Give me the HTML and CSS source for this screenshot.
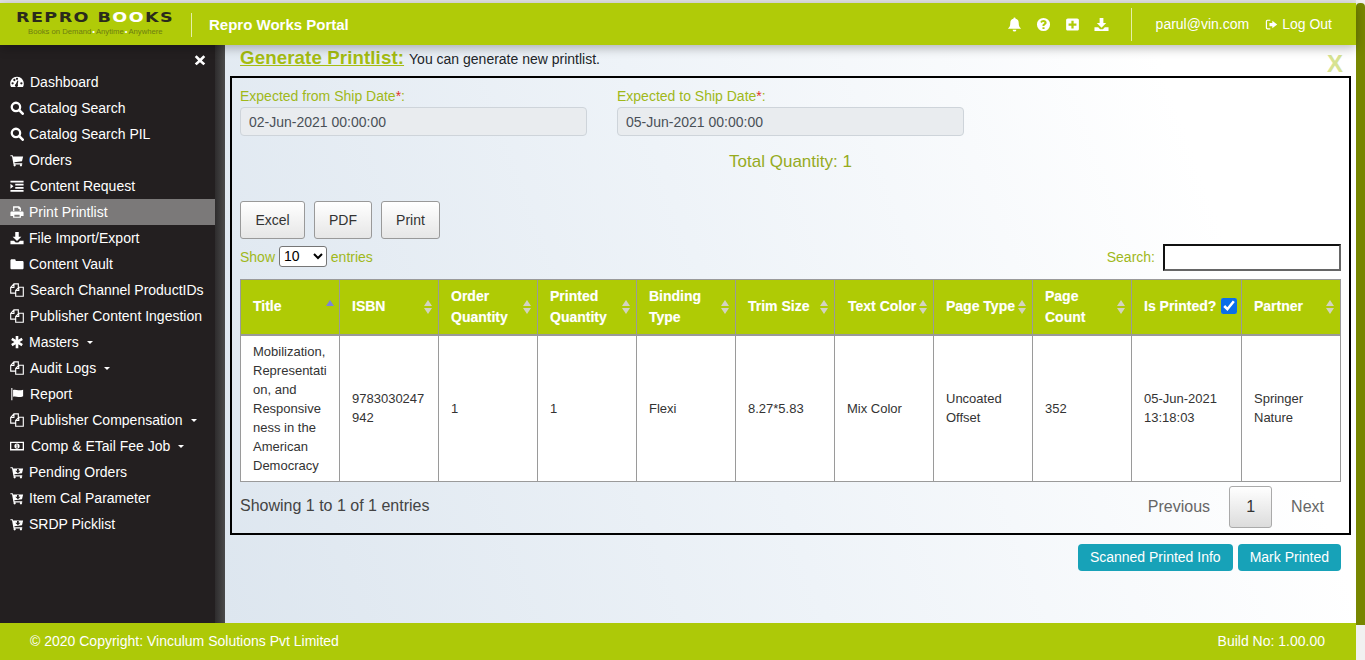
FILE: index.html
```html
<!DOCTYPE html>
<html lang="en">
<head>
<meta charset="utf-8">
<title>Repro Works Portal</title>
<link rel="stylesheet" href="styles.css">
</head>
<body>
<svg class="sprite" aria-hidden="true">
  <symbol id="i-dash" viewBox="0 0 16 16"><path fill-rule="evenodd" d="M8 2C3.400 2 .2 5.700.2 10c0 1.400.3 2.600 1 3.800h13.600c.7-1.200 1-2.400 1-3.800C15.800 5.700 12.600 2 8 2zM3 10.800a1.300 1.300 0 1 1 0-2.600 1.300 1.300 0 0 1 0 2.600zm2-3.800a1.300 1.300 0 1 1 0-2.600 1.300 1.300 0 0 1 0 2.600zM8 5.700a1.300 1.300 0 1 1 0-2.600 1.300 1.300 0 0 1 0 2.600zm1.100 6.700a1.800 1.800 0 1 1-2.400-2.200L8.500 6.400l1 .3-.6 3.900c.3.500.4 1.100.2 1.800zm3.900-1.600a1.300 1.300 0 1 1 0-2.600 1.300 1.300 0 0 1 0 2.600z"/></symbol>
  <symbol id="i-search" viewBox="0 0 16 16"><circle cx="6.800" cy="6.800" r="4.800" fill="none" stroke="currentColor" stroke-width="2.600"/><path d="M10.500 10.500l4 4" stroke="currentColor" stroke-width="3" stroke-linecap="round"/></symbol>
  <symbol id="i-cart" viewBox="0 0 16 16"><path d="M.5 2.500h2.600l.4 1.500H15l-1.300 5.500-8.700 1 .3 1.200h8.700v1.300H4L2.300 3.800H.5z"/><circle cx="5.300" cy="14" r="1.300"/><circle cx="12.500" cy="14" r="1.300"/></symbol>
  <symbol id="i-indent" viewBox="0 0 16 16"><path d="M.5 2h15v2H.5zM6 5.500h9.500v2H6zM6 9h9.500v2H6zM.5 12.500h15v2H.5zM.5 5.500l3.500 2.700L.5 11z"/></symbol>
  <symbol id="i-print" viewBox="0 0 16 16"><path fill-rule="evenodd" d="M3.500 1.500h7l2 2v3.300H11V4.500H9.500V3h-4.500v3.800H3.500zM1.800 7.500h12.400c.7 0 1.300.6 1.300 1.300v3.700h-3v2H3.500v-2h-3V8.800c0-.7.600-1.300 1.300-1.300zM5 11v2.500h6V11z"/></symbol>
  <symbol id="i-download" viewBox="0 0 16 16"><path d="M6 1h4v5.500h3L8 11.500 3 6.500h3zM.5 11h4l2 2h3l2-2h4v4H.5z"/></symbol>
  <symbol id="i-folder" viewBox="0 0 16 16"><path d="M.5 4c0-.8.6-1.500 1.400-1.500h3.300c.7 0 1.300.6 1.300 1.300V4.500h7.600c.8 0 1.400.6 1.400 1.400v6.600c0 .8-.6 1.500-1.400 1.500H1.900c-.8 0-1.400-.7-1.400-1.500z"/></symbol>
  <symbol id="i-files" viewBox="0 0 16 16"><path fill="none" stroke="currentColor" stroke-width="1.300" d="M6.500 11.500H.8V5.200L4.500 1h5v3.800M.8 5.200h3.700V1M6.500 15.200V8.500l3.500-3.700h5.200v10.400zM6.500 8.500H10V4.800"/></symbol>
  <symbol id="i-asterisk" viewBox="0 0 16 16"><path d="M6.500 1h3v4.300l3.700-2.100 1.500 2.600L11 8l3.700 2.200-1.500 2.600-3.700-2.100V15h-3v-4.300l-3.700 2.100-1.500-2.600L5 8 1.300 5.800l1.500-2.600 3.700 2.100z"/></symbol>
  <symbol id="i-flag" viewBox="0 0 16 16"><path d="M1.500 1h1.200v14H1.500zM3.500 3.500c2-1 4 0 6 .3 2 .2 3.500-.2 5.500-.8v7.500c-2 .8-3.500 1.100-5.500.9-2-.3-4-1-6-.2z"/></symbol>
  <symbol id="i-money" viewBox="0 0 16 16"><path fill-rule="evenodd" d="M0 3h16v10H0zM1.500 4.500v7h13v-7zM8 5a3 3 0 1 1 0 6 3 3 0 0 1 0-6zM7.200 6.300v.7h.5v2.300h-.6V10h2V9.300h-.6V6.300z"/></symbol>
  <symbol id="i-cartdown" viewBox="0 0 16 16"><path fill-rule="evenodd" d="M.5 2.500h2.600l.4 1.500H15l-1.300 5.500-8.700 1 .3 1.200h8.700v1.300H4L2.300 3.800H.5zM8 4.500v2H6l3 3 3-3h-2v-2z"/><circle cx="5.300" cy="14" r="1.300"/><circle cx="12.500" cy="14" r="1.300"/></symbol>
  <symbol id="i-times" viewBox="0 0 16 16"><path d="M3.500 1.500L8 6l4.500-4.500 2.500 2.500L10.500 8.500l4.500 4-2.500 2.500L8 11l-4.500 4L1 12.500l4.500-4L1 4z"/></symbol>
  <symbol id="i-bell" viewBox="0 0 16 16"><path d="M8 .5a1.100 1.100 0 0 1 1.100 1.300c2.500.5 3.400 2.400 3.400 4.700 0 3 .8 4.600 2.500 6H1c1.700-1.400 2.500-3 2.500-6 0-2.300.9-4.200 3.400-4.700A1.100 1.100 0 0 1 8 .5zM6 13.500h4a2 2 0 0 1-4 0z"/></symbol>
  <symbol id="i-question" viewBox="0 0 16 16"><path fill-rule="evenodd" d="M8 1a7 7 0 1 1 0 14A7 7 0 0 1 8 1zM6.900 10.800v2h2.200v-2zM8 3.300c-1.700 0-2.900.8-3.400 2.100l1.400 1c.4-.8 1-1.200 1.900-1.200.7 0 1.100.3 1.100.8 0 .5-.4.800-1 1.200-.9.500-1.100 1.200-1.100 2v.3h2.200c0-.6.100-.8.700-1.200 1-.6 1.500-1.300 1.500-2.300 0-1.700-1.400-2.700-3.300-2.700z"/></symbol>
  <symbol id="i-plus" viewBox="0 0 16 16"><path fill-rule="evenodd" d="M3 1.500h10c1 0 1.800.8 1.800 1.800v9.400c0 1-.8 1.800-1.800 1.800H3c-1 0-1.800-.8-1.800-1.800V3.300c0-1 .8-1.800 1.800-1.800zM6.800 4v3H3.800v2.200h3v3H9.200v-3h3V7h-3V4z"/></symbol>
  <symbol id="i-signout" viewBox="0 0 16 16"><path d="M9 3.500L15 8l-6 4.500V10H5.500V6H9zM1 4c0-1.100.8-2 1.900-2h3.600v1.500H3.200c-.4 0-.7.300-.7.700v7.600c0 .4.300.7.700.7h3.300V14H2.900C1.800 14 1 13.100 1 12z"/></symbol>
</svg>

<div class="page">
  <header class="topbar">
    <div class="logo">
      <div class="logo-name">REPRO B<span class="logo-oo">OO</span>KS</div>
      <div class="logo-tag">Books on Demand<span class="dot">•</span>Anytime<span class="dot">•</span>Anywhere</div>
    </div>
    <div class="portal">Repro Works Portal</div>
    <div class="top-icons">
      <svg class="ti"><use href="#i-bell"/></svg>
      <svg class="ti"><use href="#i-question"/></svg>
      <svg class="ti"><use href="#i-plus"/></svg>
      <svg class="ti"><use href="#i-download"/></svg>
    </div>
    <div class="user">parul@vin.com</div>
    <div class="logout"><svg class="ti-small"><use href="#i-signout"/></svg>Log Out</div>
  </header>

  <div class="middle">
    <aside class="sidebar">
      <div class="side-close"><svg class="close-ic"><use href="#i-times"/></svg></div>
      <nav class="menu">
        <a class="item"><svg class="ic"><use href="#i-dash"/></svg><span class="lab lab-wide">Dashboard</span></a>
        <a class="item"><svg class="ic"><use href="#i-search"/></svg><span class="lab">Catalog Search</span></a>
        <a class="item"><svg class="ic"><use href="#i-search"/></svg><span class="lab">Catalog Search PIL</span></a>
        <a class="item"><svg class="ic"><use href="#i-cart"/></svg><span class="lab">Orders</span></a>
        <a class="item"><svg class="ic"><use href="#i-indent"/></svg><span class="lab lab-wide">Content Request</span></a>
        <a class="item active"><svg class="ic"><use href="#i-print"/></svg><span class="lab">Print Printlist</span></a>
        <a class="item"><svg class="ic"><use href="#i-download"/></svg><span class="lab">File Import/Export</span></a>
        <a class="item"><svg class="ic"><use href="#i-folder"/></svg><span class="lab">Content Vault</span></a>
        <a class="item"><svg class="ic"><use href="#i-files"/></svg><span class="lab lab-wide">Search Channel ProductIDs</span></a>
        <a class="item"><svg class="ic"><use href="#i-files"/></svg><span class="lab lab-wide">Publisher Content Ingestion</span></a>
        <a class="item"><svg class="ic"><use href="#i-asterisk"/></svg><span class="lab">Masters</span><i class="caret"></i></a>
        <a class="item"><svg class="ic"><use href="#i-files"/></svg><span class="lab lab-wide">Audit Logs</span><i class="caret"></i></a>
        <a class="item"><svg class="ic"><use href="#i-flag"/></svg><span class="lab lab-wide">Report</span></a>
        <a class="item"><svg class="ic"><use href="#i-files"/></svg><span class="lab lab-wide">Publisher Compensation</span><i class="caret"></i></a>
        <a class="item"><svg class="ic"><use href="#i-money"/></svg><span class="lab lab-money">Comp &amp; ETail Fee Job</span><i class="caret"></i></a>
        <a class="item"><svg class="ic"><use href="#i-cartdown"/></svg><span class="lab">Pending Orders</span></a>
        <a class="item"><svg class="ic"><use href="#i-cartdown"/></svg><span class="lab">Item Cal Parameter</span></a>
        <a class="item"><svg class="ic"><use href="#i-cartdown"/></svg><span class="lab">SRDP Picklist</span></a>
      </nav>
    </aside>
    <div class="side-strip"></div>

    <main class="content">
      <div class="title-row">
        <h1 class="title">Generate Printlist:</h1>
        <span class="subtitle">You can generate new printlist.</span>
        <span class="close-x">X</span>
      </div>

      <section class="panel">
        <div class="dates">
          <div class="field">
            <label class="lbl">Expected from Ship Date<span class="req">*</span>:</label>
            <input class="date-input" type="text" value="02-Jun-2021 00:00:00" readonly>
          </div>
          <div class="field">
            <label class="lbl">Expected to Ship Date<span class="req">*</span>:</label>
            <input class="date-input" type="text" value="05-Jun-2021 00:00:00" readonly>
          </div>
        </div>
        <div class="total">Total Quantity: 1</div>

        <div class="export">
          <button class="btn btn-excel">Excel</button>
          <button class="btn btn-pdf">PDF</button>
          <button class="btn btn-print">Print</button>
        </div>

        <div class="controls">
          <div class="show">Show
            <select class="sel"><option>10</option></select>
            entries</div>
          <div class="search">Search: <input class="search-input" type="text"></div>
        </div>

        <table class="grid">
          <colgroup>
            <col class="c"><col class="c"><col class="c"><col class="c"><col class="c"><col class="c"><col class="c"><col class="c"><col class="c"><col class="c-wide"><col class="c">
          </colgroup>
          <thead>
            <tr>
              <th class="one sorted">Title</th>
              <th class="one">ISBN</th>
              <th>Order Quantity</th>
              <th>Printed Quantity</th>
              <th>Binding Type</th>
              <th class="one">Trim Size</th>
              <th class="one tight text-color">Text Color</th>
              <th class="one tight">Page Type</th>
              <th>Page Count</th>
              <th class="one tight no-sort">Is Printed? <input class="chk" type="checkbox" checked></th>
              <th class="one">Partner</th>
            </tr>
          </thead>
          <tbody>
            <tr>
              <td>Mobilization, Representati on, and Responsive ness in the American Democracy</td>
              <td>9783030247 942</td>
              <td>1</td>
              <td>1</td>
              <td>Flexi</td>
              <td>8.27*5.83</td>
              <td>Mix Color</td>
              <td>Uncoated Offset</td>
              <td>352</td>
              <td>05-Jun-2021 13:18:03</td>
              <td>Springer Nature</td>
            </tr>
          </tbody>
        </table>

        <div class="foot-row">
          <div class="info">Showing 1 to 1 of 1 entries</div>
          <div class="pager">
            <span class="pg pg-prev">Previous</span>
            <span class="pg-cur">1</span>
            <span class="pg pg-next">Next</span>
          </div>
        </div>
      </section>

      <div class="actions">
        <button class="act">Scanned Printed Info</button>
        <button class="act">Mark Printed</button>
      </div>
    </main>
  </div>

  <footer class="footer">
    <span>© 2020 Copyright: Vinculum Solutions Pvt Limited</span>
    <span class="build">Build No: 1.00.00</span>
  </footer>
</div>
<div class="scrollbar"><div class="thumb"></div></div>
</body>
</html>
```

FILE: styles.css
```css
* { box-sizing: border-box; }
html, body { height: 100%; }
body {
  margin: 0;
  height: 660px;
  overflow: hidden;
  display: flex;
  font-family: "Liberation Sans", Arial, sans-serif;
  font-size: 14px;
  color: #212529;
  background: #fff;
}
.sprite { display: none; }
.page {
  width: 1356px;
  height: 660px;
  display: flex;
  flex-direction: column;
  padding-top: 3px;
  background: #e2e2e2;
}
.scrollbar { width: 9px; height: 660px; background: #f1f1f1; }
.thumb { height: 622px; margin-top: 3px; background: #778600; border-radius: 4px 4px 0 0; }

/* top bar */
.topbar {
  height: 42px;
  flex: none;
  display: flex;
  align-items: center;
  background: #b0cb08;
  color: #fff;
  position: relative;
  z-index: 2;
  box-shadow: 0 3px 10px rgba(0, 0, 0, .28);
}
.logo { width: 192px; height: 42px; padding: 7px 0 0 16px; position: relative; }
.logo::after {
  content: "";
  position: absolute;
  right: 0;
  top: 10px;
  height: 24px;
  width: 1px;
  background: #e6efa8;
}
.logo-name {
  font-family: "DejaVu Sans", sans-serif;
  font-weight: 700;
  font-size: 13.500px;
  line-height: 15px;
  letter-spacing: 1.100px;
  color: #2a2a1c;
  white-space: nowrap;
  transform: scaleX(1.3);
  transform-origin: left;
}
.logo-oo { color: #fff; }
.logo-tag { font-size: 7.700px; line-height: 10px; color: #6d7d12; margin: 2px 0 0 12px; white-space: nowrap; }
.dot { color: #fff; margin: 0 1px; }
.portal { font-weight: 700; font-size: 15px; margin-left: 17px; }
.top-icons { margin-left: auto; display: flex; gap: 14px; width: 109px; align-items: center; }
.ti { width: 15px; height: 15px; fill: #fff; color: #fff; }
.user {
  height: 33px;
  margin-left: 15px;
  padding-left: 24px;
  border-left: 1px solid #e6efa8;
  line-height: 33px;
}
.logout { display: flex; align-items: center; margin-left: 16px; margin-right: 24px; }
.ti-small { width: 13px; height: 13px; fill: #fff; margin-right: 4px; }

/* middle */
.middle { flex: 1; display: flex; min-height: 0; }
.sidebar { width: 215px; flex: none; background: #231f20; color: #fff; }
.side-close { height: 24px; display: flex; justify-content: flex-end; align-items: center; padding: 5px 9px 0 0; }
.close-ic { width: 12px; height: 12px; fill: #fff; }
.item {
  display: flex;
  align-items: center;
  height: 26px;
  padding-left: 10px;
  white-space: nowrap;
}
.item.active { background: #7b7979; }
.ic { width: 14px; height: 14px; flex: none; fill: #fff; color: #fff; }
.lab { margin-left: 5px; }
.lab-wide { margin-left: 6px; }
.lab-money { margin-left: 7px; }
.caret {
  margin-left: 8px;
  border: 3px solid transparent;
  border-top: 3.500px solid #fff;
  border-bottom: 0;
}
.side-strip {
  width: 10px;
  flex: none;
  background: linear-gradient(to right, #2e2c2d, #4a4a4a);
}

/* content */
.content {
  flex: 1;
  min-width: 0;
  padding: 0 5px 0 5px;
  background: linear-gradient(70deg, #dde6ef 0%, #eef3f8 45%, #fff 85%);
}
.title-row {
  height: 31px;
  display: flex;
  align-items: baseline;
  padding: 1px 0 0 10px;
  position: relative;
}
.title {
  margin: 0;
  font-size: 18.720px;
  letter-spacing: .1px;
  line-height: 24px;
  font-weight: 700;
  color: #a4bc10;
  text-decoration: underline;
}
.subtitle { margin-left: 5px; font-size: 14px; }
.close-x {
  position: absolute;
  right: 8px;
  top: 7px;
  font-size: 24px;
  line-height: 24px;
  font-weight: 700;
  color: #d7e391;
}
.panel {
  height: 459px;
  border: 2px solid #000;
  padding: 8px;
}
.dates { display: flex; gap: 30px; }
.field { width: 347px; }
.lbl { display: block; color: #a0b81a; line-height: 20px; height: 21px; }
.req { color: #e0322b; }
.date-input {
  display: block;
  width: 100%;
  height: 29px;
  padding: 0 8px;
  border: 1px solid #ced4da;
  border-radius: 4px;
  background: #e9ecef;
  color: #495057;
  font: 14px "Liberation Sans", Arial, sans-serif;
}
.total {
  text-align: center;
  font-size: 17px;
  line-height: 20px;
  color: #96ab1e;
  margin-top: 16px;
  height: 20px;
}
.export { display: flex; gap: 9px; margin-top: 29px; }
.btn {
  height: 38px;
  padding: 0;
  border: 1px solid #999;
  border-radius: 3px;
  background: linear-gradient(#fff, #e6e6e6);
  color: #333;
  font: 14px "Liberation Sans", Arial, sans-serif;
}
.btn-excel { width: 65px; }
.btn-pdf { width: 58px; }
.btn-print { width: 59px; }
.controls {
  display: flex;
  justify-content: space-between;
  align-items: center;
  height: 27px;
  margin-top: 5px;
  color: #a0b81a;
}
.show { margin-top: -3px; word-spacing: -1px; }
.sel {
  width: 48px;
  height: 21px;
  margin: 0 1px;
  font: 14px "Liberation Sans", Arial, sans-serif;
  background: #fff;
  border: 1px solid #767676;
  border-radius: 3px;
  color: #000;
}
.search { display: flex; align-items: center; gap: 8px; line-height: 25px; }
.search-input {
  width: 178px;
  height: 27px;
  border: 2px solid #111;
  border-right-color: #666;
  border-bottom-color: #666;
  background: #fff;
}
.grid {
  table-layout: fixed;
  width: 1101px;
  margin-top: 8px;
  border-collapse: collapse;
  background: #fff;
  font-size: 13px;
  line-height: 19px;
}
.c { width: 99px; }
.c-wide { width: 110px; }
.grid th {
  height: 55px;
  padding: 6px 20px 6px 12px;
  background: #afcb05;
  color: #fff;
  font-size: 14px;
  line-height: 21px;
  text-align: left;
  border: 1px solid #9a9a9a;
  border-bottom: 2px solid #9a9a9a;
  position: relative;
  text-shadow: 0 0 1px rgba(255, 255, 255, .4);
}
.grid th.one { padding-bottom: 8px; }
.grid th.tight { padding-right: 6px; white-space: nowrap; }
.grid th.text-color { padding-left: 13px; }
.grid th::before, .grid th::after {
  content: "";
  position: absolute;
  right: 6px;
  border-left: 4.500px solid transparent;
  border-right: 4.500px solid transparent;
}
.grid th::before { top: 20px; border-bottom: 6.500px solid #d3d3c0; }
.grid th::after { top: 28px; border-top: 6.500px solid #d3d3c0; }
.grid th.sorted::before { border-bottom-color: #7b84d8; right: 5px; }
.grid th.sorted::after { display: none; }
.grid th.no-sort::before, .grid th.no-sort::after { display: none; }
.chk {
  width: 16px;
  height: 16px;
  margin: 0 0 0 1px;
  vertical-align: -3px;
  accent-color: #0a6fe8;
}
.grid td {
  padding: 6px 12px;
  border: 1px solid #9a9a9a;
  color: #333;
  overflow-wrap: break-word;
}
.grid td + td { padding-bottom: 7px; }
.foot-row {
  display: flex;
  justify-content: space-between;
  align-items: center;
  height: 42px;
  margin-top: 4px;
}
.info { font-size: 16px; color: #444; margin-top: -3px; }
.pager { display: flex; align-items: center; font-size: 16px; color: #666; }
.pg-prev { padding-right: 19px; }
.pg-next { padding: 0 17px 0 19px; }
.pg-cur {
  width: 43px;
  height: 42px;
  line-height: 40px;
  text-align: center;
  border: 1px solid #aaa;
  border-radius: 3px;
  background: linear-gradient(#fff, #dcdcdc);
  color: #333;
}
.actions {
  display: flex;
  justify-content: flex-end;
  gap: 5px;
  padding: 9px 10px 0 0;
}
.act {
  height: 27px;
  padding: 0 12px 2px;
  border: 0;
  border-radius: 4px;
  background: #17a2b8;
  color: #fff;
  font: 14px "Liberation Sans", Arial, sans-serif;
}

/* footer */
.footer {
  height: 37px;
  flex: none;
  display: flex;
  justify-content: space-between;
  align-items: center;
  padding: 0 31px 2px 30px;
  background: #adc908;
  color: #fff;
}
```
